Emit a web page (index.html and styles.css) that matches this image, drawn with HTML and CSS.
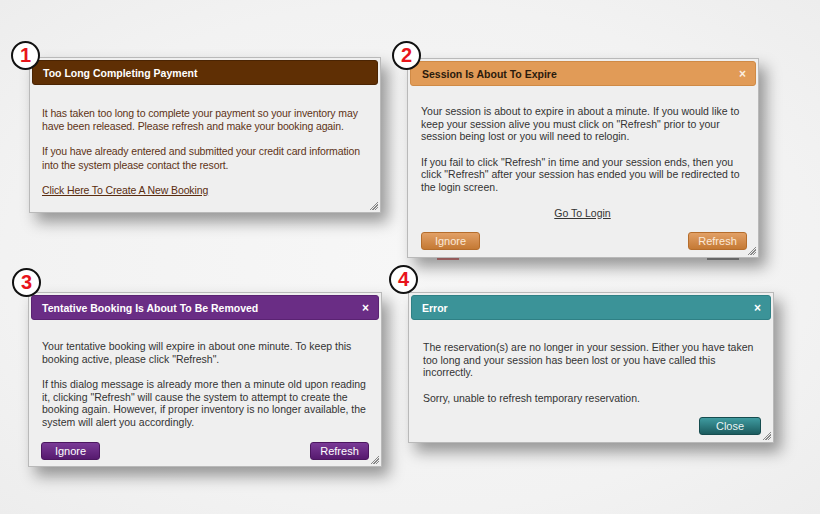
FILE: index.html
```html
<!DOCTYPE html>
<html>
<head>
<meta charset="utf-8">
<link rel="stylesheet" href="styles.css">
</head>
<body>
<div class="canvas">

  <div class="panel p1">
    <div class="dialog">
      <div class="titlebar t-brown"><span>Too Long Completing Payment</span></div>
      <div class="content c-brown">
        <p>It has taken too long to complete your payment so your inventory may have been released. Please refresh and make your booking again.</p>
        <p>If you have already entered and submitted your credit card information into the system please contact the resort.</p>
        <p><a class="link">Click Here To Create A New Booking</a></p>
      </div>
      <div class="grip"></div>
    </div>
    <div class="badge">1</div>
  </div>

  <div class="panel p2">
    <div class="behind"><span class="red"></span><span class="grey"></span></div>
    <div class="dialog">
      <div class="titlebar t-orange"><span>Session Is About To Expire</span><span class="x">×</span></div>
      <div class="content">
        <p>Your session is about to expire in about a minute. If you would like to keep your session alive you must click on "Refresh" prior to your session being lost or you will need to relogin.</p>
        <p>If you fail to click "Refresh" in time and your session ends, then you click "Refresh" after your session has ended you will be redirected to the login screen.</p>
        <p class="center"><a class="link">Go To Login</a></p>
      </div>
      <div class="buttons">
        <button class="btn b-orange">Ignore</button>
        <button class="btn b-orange">Refresh</button>
      </div>
      <div class="grip"></div>
    </div>
    <div class="badge">2</div>
  </div>

  <div class="panel p3">
    <div class="dialog">
      <div class="titlebar t-purple"><span>Tentative Booking Is About To Be Removed</span><span class="x">×</span></div>
      <div class="content">
        <p>Your tentative booking will expire in about one minute. To keep this booking active, please click "Refresh".</p>
        <p>If this dialog message is already more then a minute old upon reading it, clicking "Refresh" will cause the system to attempt to create the booking again. However, if proper inventory is no longer available, the system will alert you accordingly.</p>
      </div>
      <div class="buttons">
        <button class="btn b-purple">Ignore</button>
        <button class="btn b-purple">Refresh</button>
      </div>
      <div class="grip"></div>
    </div>
    <div class="badge">3</div>
  </div>

  <div class="panel p4">
    <div class="dialog">
      <div class="titlebar t-teal"><span>Error</span><span class="x">×</span></div>
      <div class="content">
        <p>The reservation(s) are no longer in your session. Either you have taken too long and your session has been lost or you have called this incorrectly.</p>
        <p>Sorry, unable to refresh temporary reservation.</p>
      </div>
      <div class="buttons end">
        <button class="btn b-teal">Close</button>
      </div>
      <div class="grip"></div>
    </div>
    <div class="badge">4</div>
  </div>

</div>
</body>
</html>
```

FILE: styles.css
```css
html, body {
  margin: 0;
  padding: 0;
}
body {
  background: #f3f3f3;
  font-family: "Liberation Sans", Arial, sans-serif;
}
.canvas {
  position: relative;
  width: 820px;
  height: 514px;
  overflow: hidden;
  background: radial-gradient(ellipse at center, #f7f7f7 0%, #f2f2f2 70%, #ededed 100%);
}
.panel {
  position: absolute;
}
.p1 { left: 29px; top: 57px; width: 352px; height: 156px; }
.p2 { left: 407px; top: 58px; width: 352px; height: 200px; }
.p3 { left: 28px; top: 292px; width: 354px; height: 175px; }
.p4 { left: 408px; top: 292px; width: 366px; height: 151px; }

.dialog {
  position: relative;
  box-sizing: border-box;
  height: 100%;
  display: flex;
  flex-direction: column;
  background: #efefef;
  border: 1px solid #b9b9b9;
  padding: 2px;
  box-shadow: 7px 9px 14px rgba(0, 0, 0, 0.38);
}
.titlebar {
  height: 25px;
  box-sizing: border-box;
  border-radius: 3px;
  display: flex;
  align-items: center;
  justify-content: space-between;
  padding: 0 10px 0 10px;
  font-weight: bold;
  font-size: 10.5px;
  color: #fff;
  flex: none;
}
.t-brown { background: #5f2f04; border: 1px solid #4a2403; }
.t-orange { background: #e19b57; border: 1px solid #cf8a46; color: #2a1a0c; padding-left: 11px; }
.t-purple { background: #6a2d85; border: 1px solid #5a2272; }
.t-teal { background: #3b9398; border: 1px solid #2f8085; }
.x {
  color: #fff;
  font-size: 12px;
  font-weight: bold;
  margin-right: -1px;
}
.t-orange .x { color: #fbeee0; }

.content {
  flex: 1;
  padding: 19px 12px 0 11px;
  font-size: 10.5px;
  line-height: 12.6px;
  color: #333;
}
.p1 .content {
  padding: 22px 4px 0 10px;
  line-height: 13.4px;
  letter-spacing: -0.12px;
}
.p3 .content { padding-top: 20px; }
.p4 .content { padding-top: 21px; padding-left: 12px; }
.content p {
  margin: 0 0 13px 0;
}
.p1 .content p { margin-bottom: 11.5px; }
.c-brown { color: #5e3316; }
.link {
  text-decoration: underline;
  color: inherit;
}
.c-brown .link { color: #5a2d10; }
.center { text-align: center; }

.buttons {
  display: flex;
  justify-content: space-between;
  padding: 0 9px 6px 11px;
  flex: none;
}
.p3 .buttons { padding: 0 10px 6px 10px; }
.buttons.end { justify-content: flex-end; padding-right: 10px; padding-bottom: 6px; }
.btn {
  width: 59px;
  height: 18px;
  border-radius: 3px;
  font-family: "Liberation Sans", Arial, sans-serif;
  font-size: 11px;
  color: #fff;
  padding: 0;
  cursor: pointer;
}
.b-orange {
  background: linear-gradient(#e2a066, #c47934);
  border: 1px solid #b56d2c;
  color: #fbe9d8;
}
.b-purple {
  background: linear-gradient(#7a3a96, #561a6e);
  border: 1px solid #4b165f;
}
.b-teal {
  width: 62px;
  background: linear-gradient(#3f9ba0, #1b5b5e);
  border: 1px solid #164c4f;
  color: #e8f4f4;
}
.grip {
  position: absolute;
  right: 2px;
  bottom: 2px;
  width: 8px;
  height: 8px;
  background: linear-gradient(135deg, transparent 0 45%, #888 45% 52%, transparent 52% 62%, #888 62% 69%, transparent 69% 80%, #888 80% 87%, transparent 87%);
}

.badge {
  position: absolute;
  width: 25px;
  height: 25px;
  border: 2.5px solid #111;
  border-radius: 50%;
  background: #fff;
  color: #e8141b;
  font-weight: bold;
  font-size: 20px;
  line-height: 25px;
  text-align: center;
  font-family: "Liberation Sans", Arial, sans-serif;
  z-index: 2;
}
.p1 .badge { left: -18px; top: -16px; }
.p2 .badge { left: -15px; top: -17px; }
.p3 .badge { left: -16px; top: -24px; }
.p4 .badge { left: -19px; top: -27px; }

.behind {
  position: absolute;
  left: 0;
  right: 0;
  bottom: -4px;
  height: 4px;
  display: flex;
  justify-content: space-between;
  padding: 0 20px 0 30px;
}
.behind .red { width: 22px; height: 2px; background: #d88; }
.behind .grey { width: 32px; height: 2px; background: #999; }
```
